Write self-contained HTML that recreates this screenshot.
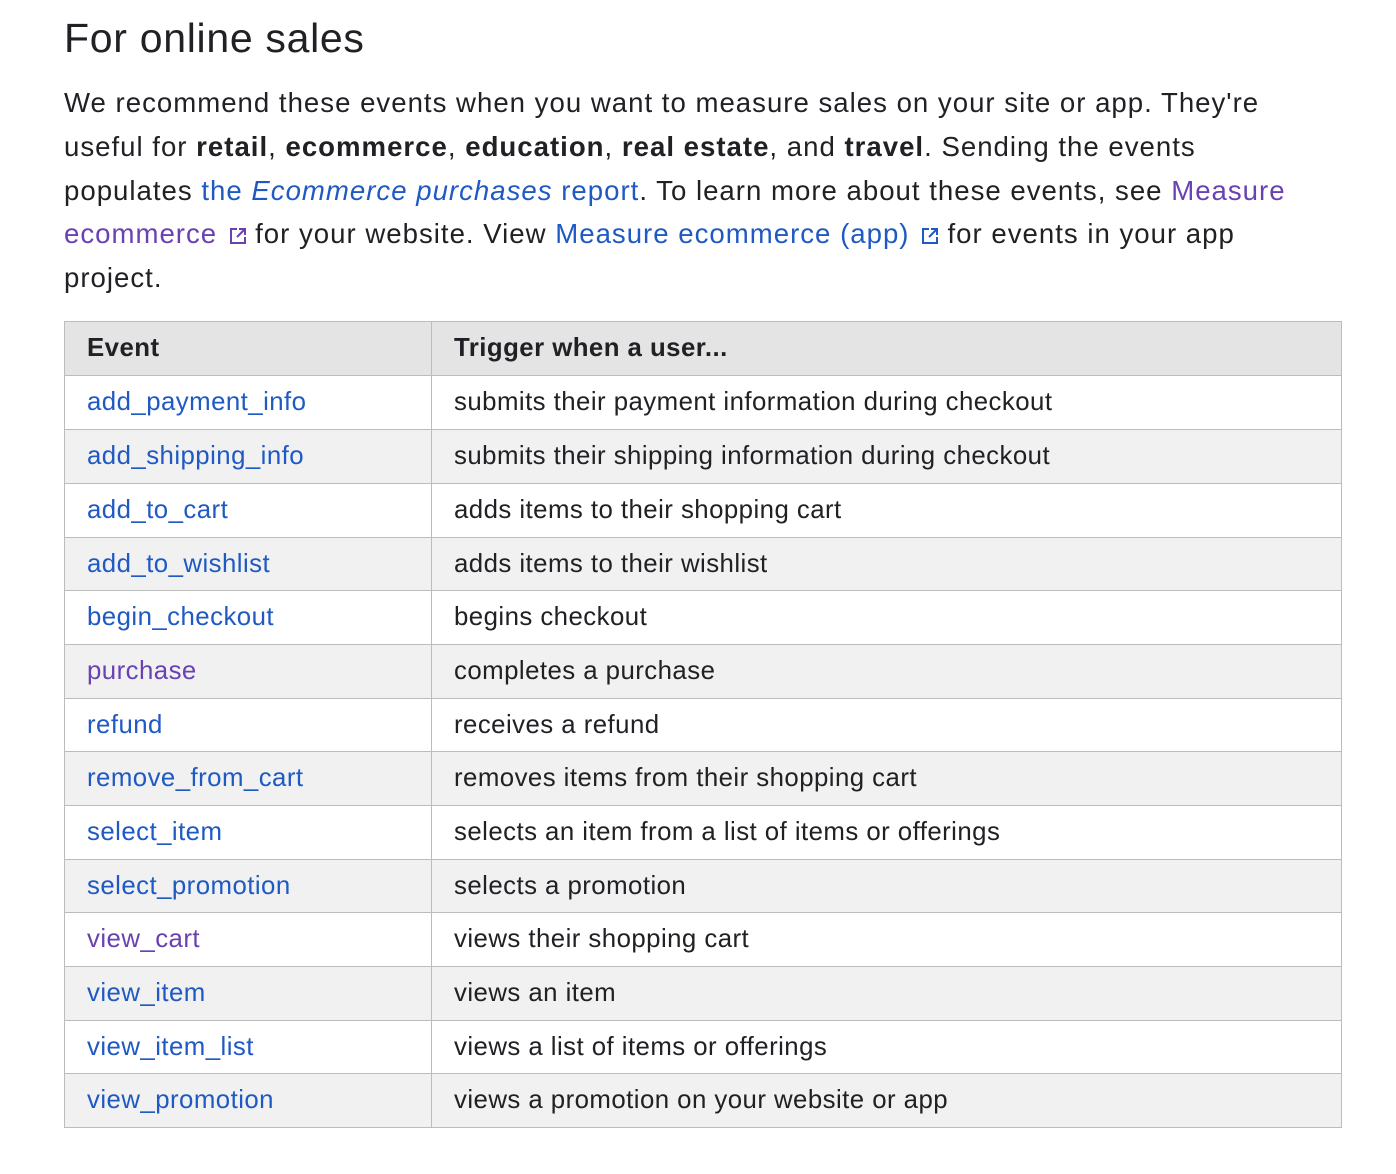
<!DOCTYPE html>
<html><head><meta charset="utf-8"><style>
body{margin:0;background:#fff;width:1396px;height:1174px;position:relative;font-family:"Liberation Sans",Arial,sans-serif;color:#202124;overflow:hidden}
h2{position:absolute;left:64px;top:12px;margin:0;font-weight:400;font-size:41px;line-height:52px;letter-spacing:0.7px}
.p{position:absolute;left:64px;top:81px;font-size:27.6px;line-height:43.75px;white-space:nowrap;letter-spacing:1px}
a{text-decoration:none;color:#1f59c3}
a.v{color:#6941b3}
.ic{display:inline-block;width:18px;height:18px;vertical-align:-2px;margin:0 8px 0 12px}
.t{position:absolute;left:64px;top:0;width:1278px}
.r{position:absolute;left:0;width:1278px;box-sizing:border-box;border:1px solid #bcbcbc;border-bottom:none;font-size:25.8px;line-height:52px;letter-spacing:0.45px}
.r.h{background:#e4e4e4;font-weight:700}
.r.g{background:#f1f1f1}
.r.last{border-bottom:1px solid #bcbcbc}
.r span{position:absolute;top:0}
.c1{left:22px}
.c2{left:389px}
.r:before{content:"";position:absolute;left:366px;top:0;bottom:0;border-left:1px solid #bcbcbc}
</style></head><body>
<h2>For online sales</h2>
<div class="p">We recommend these events when you want to measure sales on your site or app. They're<br>useful for <b>retail</b>, <b>ecommerce</b>, <b>education</b>, <b>real estate</b>, and <b>travel</b>. Sending the events<br>populates <a href="#">the <i>Ecommerce purchases</i> report</a>. To learn more about these events, see <a class="v" href="#">Measure</a><br><a class="v" href="#">ecommerce<svg class="ic" viewBox="0 0 18 18" fill="none" stroke="#6941b3" stroke-width="2"><path d="M8 2H2v14h14v-6"/><path d="M10 2h6v6M16 2L8 10"/></svg></a>for your website. View <a href="#">Measure ecommerce (app)<svg class="ic" viewBox="0 0 18 18" fill="none" stroke="#1f59c3" stroke-width="2"><path d="M8 2H2v14h14v-6"/><path d="M10 2h6v6M16 2L8 10"/></svg></a>for events in your app<br>project.</div>
<div class="t">
<div class="r h" style="top:321px;height:54px"><span class="c1">Event</span><span class="c2">Trigger when a user...</span></div>
<div class="r" style="top:375px;height:54px"><span class="c1"><a href="#">add_payment_info</a></span><span class="c2">submits their payment information during checkout</span></div>
<div class="r g" style="top:429px;height:54px"><span class="c1"><a href="#">add_shipping_info</a></span><span class="c2">submits their shipping information during checkout</span></div>
<div class="r" style="top:483px;height:54px"><span class="c1"><a href="#">add_to_cart</a></span><span class="c2">adds items to their shopping cart</span></div>
<div class="r g" style="top:537px;height:53px"><span class="c1"><a href="#">add_to_wishlist</a></span><span class="c2">adds items to their wishlist</span></div>
<div class="r" style="top:590px;height:54px"><span class="c1"><a href="#">begin_checkout</a></span><span class="c2">begins checkout</span></div>
<div class="r g" style="top:644px;height:54px"><span class="c1"><a class="v" href="#">purchase</a></span><span class="c2">completes a purchase</span></div>
<div class="r" style="top:698px;height:53px"><span class="c1"><a href="#">refund</a></span><span class="c2">receives a refund</span></div>
<div class="r g" style="top:751px;height:54px"><span class="c1"><a href="#">remove_from_cart</a></span><span class="c2">removes items from their shopping cart</span></div>
<div class="r" style="top:805px;height:54px"><span class="c1"><a href="#">select_item</a></span><span class="c2">selects an item from a list of items or offerings</span></div>
<div class="r g" style="top:859px;height:53px"><span class="c1"><a href="#">select_promotion</a></span><span class="c2">selects a promotion</span></div>
<div class="r" style="top:912px;height:54px"><span class="c1"><a class="v" href="#">view_cart</a></span><span class="c2">views their shopping cart</span></div>
<div class="r g" style="top:966px;height:54px"><span class="c1"><a href="#">view_item</a></span><span class="c2">views an item</span></div>
<div class="r" style="top:1020px;height:53px"><span class="c1"><a href="#">view_item_list</a></span><span class="c2">views a list of items or offerings</span></div>
<div class="r g last" style="top:1073px;height:55px"><span class="c1"><a href="#">view_promotion</a></span><span class="c2">views a promotion on your website or app</span></div>
</div>
</body></html>
